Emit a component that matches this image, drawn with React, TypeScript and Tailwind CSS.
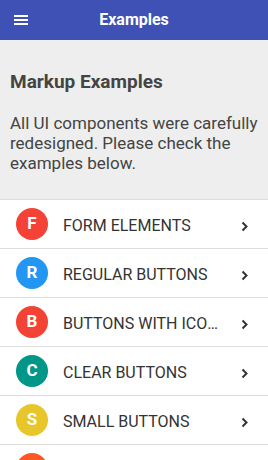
import React from "react";

const items = [
  { letter: "F", label: "FORM ELEMENTS", color: "bg-[#f44336]" },
  { letter: "R", label: "REGULAR BUTTONS", color: "bg-[#2196f3]" },
  { letter: "B", label: "BUTTONS WITH ICONS", color: "bg-[#f44336]" },
  { letter: "C", label: "CLEAR BUTTONS", color: "bg-[#009688]" },
  { letter: "S", label: "SMALL BUTTONS", color: "bg-[#e8c52b]" },
  { letter: "L", label: "LARGE BUTTONS", color: "bg-[#ff5722]" },
];

export default function App() {
  return (
    <div className="w-[268px] h-[460px] overflow-hidden bg-white font-['Roboto',sans-serif]">
      <header className="h-10 bg-[#3f51b5] flex items-center">
        <div className="w-10 flex items-center justify-center">
          <div className="w-[14px] flex flex-col gap-[2px] ml-[2px]">
            <span className="block h-[2px] bg-white" />
            <span className="block h-[2px] bg-white" />
            <span className="block h-[2px] bg-white" />
          </div>
        </div>
        <h1 className="flex-1 text-center text-white text-[16px] font-bold">Examples</h1>
        <div className="w-10" />
      </header>
      <section className="h-[160px] bg-[#eeeeee] border-b border-[#dddddd] px-[10px] pt-[30px] text-[#444444]">
        <h2 className="text-[19px] font-bold leading-[24px]">Markup Examples</h2>
        <p className="mt-[19px] text-[17px] leading-[20px]">
          All UI components were carefully redesigned. Please check the examples below.
        </p>
      </section>
      <ul>
        {items.map((it) => (
          <li
            key={it.label}
            className="h-[49px] border-b border-[#dddddd] flex items-center pl-4 pr-5"
          >
            <div
              className={`w-8 h-8 rounded-full ${it.color} flex items-center justify-center text-white text-[17px] font-bold shrink-0`}
            >
              {it.letter}
            </div>
            <span className="ml-[15px] w-[156px] truncate text-[16px] text-[#333333] mt-[3px]">
              {it.label}
            </span>
            <svg
              className="ml-auto mt-[5px]"
              width="7"
              height="11"
              viewBox="0 0 7 11"
              fill="none"
            >
              <path d="M1.5 1.5L5.5 5.5L1.5 9.5" stroke="#333" strokeWidth="2" />
            </svg>
          </li>
        ))}
      </ul>
    </div>
  );
}
